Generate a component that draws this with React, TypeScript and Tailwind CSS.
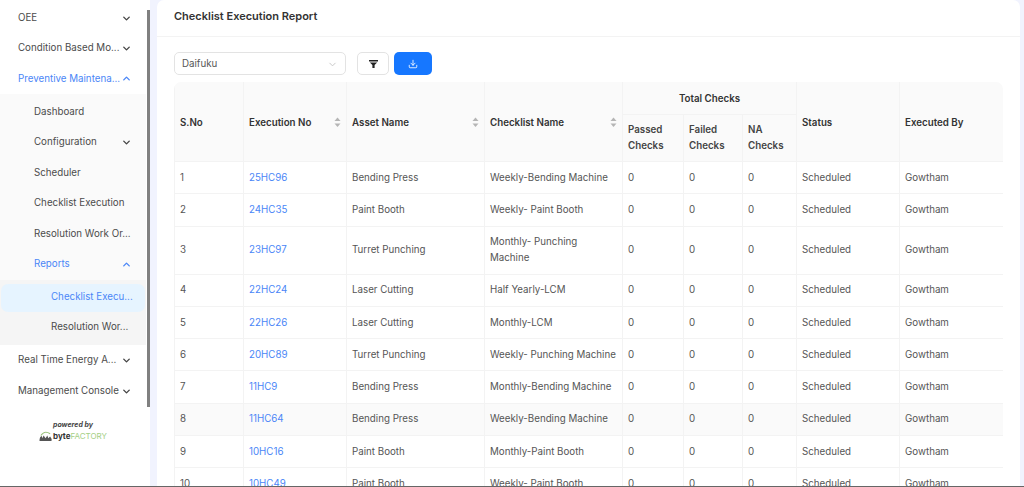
import { ChevronDown, ChevronUp, Download } from 'lucide-react';

const rows = [
  ['1', '25HC96', 'Bending Press', 'Weekly-Bending Machine'],
  ['2', '24HC35', 'Paint Booth', 'Weekly- Paint Booth'],
  ['3', '23HC97', 'Turret Punching', 'Monthly- Punching Machine'],
  ['4', '22HC24', 'Laser Cutting', 'Half Yearly-LCM'],
  ['5', '22HC26', 'Laser Cutting', 'Monthly-LCM'],
  ['6', '20HC89', 'Turret Punching', 'Weekly- Punching Machine'],
  ['7', '11HC9', 'Bending Press', 'Monthly-Bending Machine'],
  ['8', '11HC64', 'Bending Press', 'Weekly-Bending Machine'],
  ['9', '10HC16', 'Paint Booth', 'Monthly-Paint Booth'],
  ['10', '10HC49', 'Paint Booth', 'Weekly- Paint Booth'],
];

const colClasses = ['w-[69px]', 'w-[103px]', 'w-[138px]', 'w-[138px]', 'w-[61px]', 'w-[59px]', 'w-[54px]', 'w-[103px]', 'w-[105px]'];

function SortIcon() {
  return (
    <svg width="7" height="11" viewBox="0 0 7 11" className="shrink-0">
      <path d="M3.5 0.5 L6.5 4 H0.5 Z" fill="#b5b5b5" />
      <path d="M3.5 10 L6.5 6.5 H0.5 Z" fill="#b5b5b5" />
    </svg>
  );
}

function MenuItem({
  label,
  indent,
  open,
  arrow,
  active,
  className = '',
}: {
  label: string;
  indent: string;
  open?: boolean;
  arrow?: boolean;
  active?: boolean;
  className?: string;
}) {
  const Icon = open ? ChevronUp : ChevronDown;
  return (
    <div className={`flex h-[30.4px] items-center justify-between pr-[14px] ${indent} ${active ? 'text-[#4a86f7]' : 'text-[#4b4b4b]'} ${className}`}>
      <span className="whitespace-nowrap">{label}</span>
      {arrow && <Icon size={11} strokeWidth={3} className={`shrink-0 ${active ? 'text-[#4a86f7]' : 'text-[#444]'}`} />}
    </div>
  );
}

function Sidebar() {
  return (
    <div className="flex w-[150px] shrink-0 bg-white text-[9.75px]">
      <div className="w-[146px]">
        <div className="pt-[3px]">
          <MenuItem label="OEE" indent="pl-[18px]" arrow />
          <MenuItem label="Condition Based Mo..." indent="pl-[18px]" arrow />
          <MenuItem label="Preventive Maintena..." indent="pl-[18px]" arrow open active />
        </div>
        <div className="bg-[#fafafa] pt-[3px]">
          <MenuItem label="Dashboard" indent="pl-[34px]" />
          <MenuItem label="Configuration" indent="pl-[34px]" arrow />
          <MenuItem label="Scheduler" indent="pl-[34px]" />
          <MenuItem label="Checklist Execution" indent="pl-[34px]" />
          <MenuItem label="Resolution Work Or..." indent="pl-[34px]" />
          <MenuItem label="Reports" indent="pl-[34px]" arrow open active />
          <div className="bg-[#f5f5f5] px-[1px] pb-[1px] pt-[4px]">
            <div className="flex h-[28px] items-center rounded-[7px] bg-[#e6f4ff] pl-[50px] text-[#4a86f7]">Checklist Execu...</div>
            <div className="flex h-[32px] items-center pl-[50px] text-[#4b4b4b]">Resolution Wor...</div>
          </div>
        </div>
        <MenuItem label="Real Time Energy A..." indent="pl-[18px]" arrow className="mt-[1px]" />
        <MenuItem label="Management Console" indent="pl-[18px]" arrow />
        <div className="mt-[14px] flex flex-col items-center">
          <span className="text-[7px] font-bold italic leading-[10px] text-[#444]">powered by</span>
          <div className="flex items-center">
            <svg width="13" height="12" viewBox="0 0 14 13" className="mr-[1px]">
              <path d="M2 6 Q6 0 12 4" fill="none" stroke="#9ac27a" strokeWidth="1.2" />
              <path d="M0.5 12 Q0.5 7 3 6.5 L3.5 9 L5 6 L7 9 L9 6 L10 9 L12 7 Q14 9 13.5 12 Z" fill="#555" />
            </svg>
            <span className="text-[8px] font-bold leading-[12px] text-[#333]">byte</span>
            <span className="text-[8px] leading-[12px] text-[#a5cf85]">FACTORY</span>
          </div>
        </div>
      </div>
      <div className="w-[4px]">
        <div className="ml-[1px] mt-[10px] h-[397px] w-[3px] bg-[#808080]" />
      </div>
    </div>
  );
}

function Th({ children, sort }: { children: React.ReactNode; sort?: boolean }) {
  return (
    <th rowSpan={2} className="border-r border-b border-[#f3f3f3] bg-[#fafafa] px-[5px] pt-[2px] text-left font-semibold text-[#333]">
      <div className="flex items-center justify-between">
        <span>{children}</span>
        {sort && <SortIcon />}
      </div>
    </th>
  );
}

function ReportTable() {
  return (
    <div className="mx-[17px] mt-[7px] overflow-hidden rounded-t-[7px]">
      <table className="w-[830px] table-fixed border-separate border-spacing-0 border-l border-[#f3f3f3] text-[9.75px] leading-[16px]">
        <colgroup>
          {colClasses.map((c, i) => (
            <col key={i} className={c} />
          ))}
        </colgroup>
        <thead>
          <tr className="h-[33px]">
            <Th>S.No</Th>
            <Th sort>Execution No</Th>
            <Th sort>Asset Name</Th>
            <Th sort>Checklist Name</Th>
            <th colSpan={3} className="border-r border-b border-[#f3f3f3] bg-[#fafafa] pt-[2px] text-center font-semibold text-[#333]">Total Checks</th>
            <Th>Status</Th>
            <Th>Executed By</Th>
          </tr>
          <tr className="h-[47px]">
            {['Passed Checks', 'Failed Checks', 'NA Checks'].map((h) => (
              <th key={h} className="border-r border-b border-[#f3f3f3] bg-[#fafafa] px-[5px] text-left font-semibold text-[#444]">{h}</th>
            ))}
          </tr>
        </thead>
        <tbody className="text-[#555]">
          {rows.map((r, i) => (
            <tr key={r[0]} className={`${i === 2 ? 'h-[48px]' : 'h-[32.3px]'} ${i === 7 ? 'bg-[#fafafa]' : ''}`}>
              <td className="border-r border-b border-[#f3f3f3] px-[5px]">{r[0]}</td>
              <td className="border-r border-b border-[#f3f3f3] px-[5px] text-[#4a86f7]">{r[1]}</td>
              <td className="border-r border-b border-[#f3f3f3] px-[5px]">{r[2]}</td>
              <td className="border-r border-b border-[#f3f3f3] px-[5px]">{r[3]}</td>
              <td className="border-r border-b border-[#f3f3f3] px-[5px]">0</td>
              <td className="border-r border-b border-[#f3f3f3] px-[5px]">0</td>
              <td className="border-r border-b border-[#f3f3f3] px-[5px]">0</td>
              <td className="border-r border-b border-[#f3f3f3] px-[5px]">Scheduled</td>
              <td className="border-r border-b border-[#f3f3f3] px-[5px]">Gowtham</td>
            </tr>
          ))}
        </tbody>
      </table>
    </div>
  );
}

export default function App() {
  return (
    <div className="flex h-[487px] w-[1024px] flex-col overflow-hidden bg-[#f1f3fe] font-['Inter',sans-serif]">
      <div className="flex min-h-0 flex-1">
        <Sidebar />
        <div className="ml-[7px] w-[863px] shrink-0 overflow-hidden rounded-t-[7px] bg-white">
          <div className="flex h-[37px] items-center border-b border-[#f3f3f3] pb-[3px] pl-[17px] text-[11px] font-semibold text-[#333]">
            Checklist Execution Report
          </div>
          <div className="mt-[15px] flex items-center pl-[17px]">
            <div className="flex h-[23px] w-[172px] items-center justify-between rounded-[5px] border border-[#e3e3e3] pl-[7px] pr-[7px] pt-[2px] text-[9.75px] text-[#555]">
              <span>Daifuku</span>
              <ChevronDown size={11} className="text-[#c4c4c4]" />
            </div>
            <div className="ml-[11px] flex h-[23px] w-[32px] items-center justify-center rounded-[5px] border border-[#e3e3e3] bg-white pt-[1px]">
              <svg width="9" height="8" viewBox="0 0 9 8">
                <path d="M0 0 H9 V1.6 H0 Z M0.8 2.4 H8.2 L5.6 5 V8 H3.4 V5 Z" fill="#222" />
              </svg>
            </div>
            <div className="ml-[5px] flex h-[23px] w-[38px] items-center justify-center rounded-[5px] bg-[#1677ff]">
              <Download size={10} className="text-white" />
            </div>
          </div>
          <ReportTable />
        </div>
      </div>
      <div className="h-[1px] shrink-0 bg-[#666]" />
    </div>
  );
}
